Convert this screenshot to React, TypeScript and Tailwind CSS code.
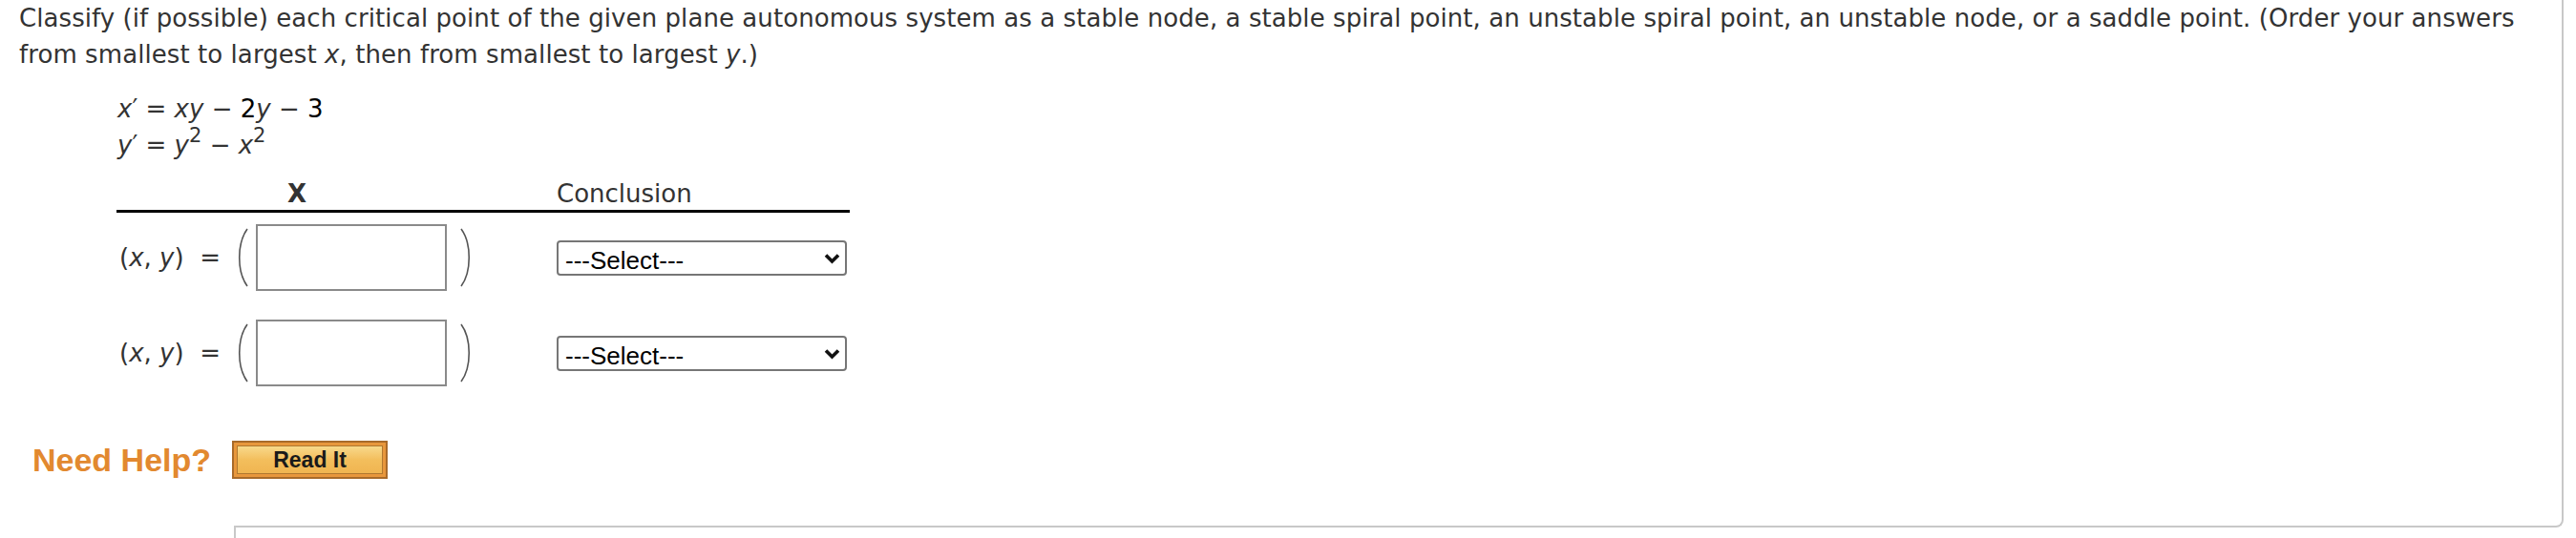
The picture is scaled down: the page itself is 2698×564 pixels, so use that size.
import React from 'react';

const verdana = { fontFamily: '"DejaVu Sans", Verdana, sans-serif' };

function Paren({ side }: { side: 'left' | 'right' }) {
  return (
    <svg width="14" height="62" viewBox="0 0 14 62" className="shrink-0">
      <path
        d={side === 'left' ? 'M12 1 C1 16 1 46 12 61' : 'M2 1 C13 16 13 46 2 61'}
        fill="none"
        stroke="#555"
        strokeWidth="1.6"
      />
    </svg>
  );
}

function PointRow() {
  return (
    <div className="flex items-center h-[70px]">
      {/* (x, y) = */}
      <div className="w-[125px] pl-[3px] text-[26px] leading-[38px] text-[#333] whitespace-nowrap">
        (<i>x</i>, <i>y</i>)&nbsp; =
      </div>
      <Paren side="left" />
      <div className="ml-[7px] w-[200px] h-[70px] border-2 border-[#8a8a8a] bg-white" />
      <div className="ml-[13px]">
        <Paren side="right" />
      </div>
      <div className="relative ml-[88px] w-[304px] h-[37px]">
        <select
          defaultValue=""
          className="appearance-none w-full h-full border-2 border-[#767676] rounded-[4px] bg-white pl-[7px] text-[26px] text-black outline-none"
          style={{ fontFamily: '"Liberation Sans", Arial, sans-serif' }}
        >
          <option value="">---Select---</option>
          <option>stable node</option>
          <option>stable spiral point</option>
          <option>unstable spiral point</option>
          <option>unstable node</option>
          <option>saddle point</option>
        </select>
        {/* chevron */}
        <svg
          width="17"
          height="12"
          viewBox="0 0 17 12"
          className="absolute right-[7px] top-[13px] pointer-events-none"
        >
          <path d="M2 2.5 L8.5 9 L15 2.5" fill="none" stroke="#111" strokeWidth="3.6" />
        </svg>
      </div>
    </div>
  );
}

export default function App() {
  return (
    <div className="w-[2698px] h-[564px] overflow-hidden bg-white" style={verdana}>
      <div className="w-[2685px] border-r-2 border-[#c8c8c8]">
        {/* Question text */}
        <p className="pl-[20px] text-[26px] leading-[38px] tracking-[0.07px] text-[#333] whitespace-nowrap">
          Classify (if possible) each critical point of the given plane autonomous system as a stable node, a stable
          spiral point, an unstable spiral point, an unstable node, or a saddle point. (Order your answers
          <br />
          from smallest to largest <i>x</i>, then from smallest to largest <i>y</i>.)
        </p>

        {/* System */}
        <div className="mt-[19px] pl-[123px] text-[26px] leading-[38px] text-[#333] whitespace-nowrap">
          <div>
            <i>x</i>′ = <i>xy</i> − <span className="text-black">2</span>
            <i>y</i> − <span className="text-black">3</span>
          </div>
          <div>
            <i>y</i>′ = <i>y</i>
            <sup className="text-[21px] relative -top-[12px]">2</sup> − <i>x</i>
            <sup className="text-[21px] relative -top-[12px]">2</sup>
          </div>
        </div>

        {/* Answer table */}
        <div className="mt-[16px] ml-[122px] w-[768px]">
          <div className="flex items-center h-[36px] border-b-[3px] border-black text-[26px] text-[#333]">
            <div className="w-[378px] text-center font-bold">X</div>
            <div className="ml-[83px]">Conclusion</div>
          </div>
          <div className="mt-[12px] flex flex-col gap-[30px]">
            <PointRow />
            <PointRow />
          </div>
        </div>

        {/* Help */}
        <div className="mt-[57px] flex items-center h-[40px]">
          <span
            className="ml-[34px] text-[34px] font-bold text-[#e2892f]"
            style={{ fontFamily: '"Liberation Sans", Arial, sans-serif' }}
          >
            Need Help?
          </span>
          <button
            className="ml-[22px] w-[163px] h-[40px] border-2 border-[#a86a2a] bg-[#e8973c] p-[3px]"
            style={{ fontFamily: '"Liberation Sans", Arial, sans-serif' }}
          >
            <div className="w-full h-full border border-[#b07830] bg-gradient-to-b from-[#f8d98a] via-[#f3be5c] to-[#f0b551] flex items-center justify-center text-[23px] font-bold text-[#1a1a1a]">
              Read It
            </div>
          </button>
        </div>
      </div>

      {/* Panel edge */}
      <div className="ml-[245px] w-[2440px] h-[51px] border-r-2 border-b-2 border-[#c8c8c8] rounded-br-[8px]" />
      <div className="ml-[245px] h-[40px] border-l-2 border-[#c8c8c8]" />
    </div>
  );
}
